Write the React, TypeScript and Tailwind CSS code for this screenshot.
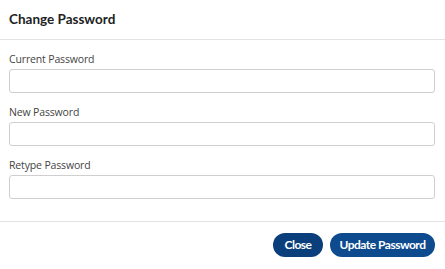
import React from "react";

export default function App() {
  const fields = ["Current Password", "New Password", "Retype Password"];
  return (
    <div className="w-[445px] h-[269px] bg-white flex flex-col">
      <div className="h-[39px] flex items-center pl-[9px] border-b border-[#e3e3e3] box-content">
        <h1 className="text-[13.5px] font-bold text-[#222] [font-family:Lato,'Liberation_Sans',sans-serif]">
          Change Password
        </h1>
      </div>
      <div className="pl-[9px] pr-[10px] pt-[12px] pb-[22px] flex flex-col gap-[12px] border-b border-[#e3e3e3]">
        {fields.map((f) => (
          <div key={f} className="flex flex-col gap-[2px]">
            <label className="text-[10.5px] leading-[15px] tracking-[-0.15px] text-[#444] [font-family:'Open_Sans',sans-serif]">
              {f}
            </label>
            <input
              type="password"
              className="h-[24px] w-full border border-[#cfcfcf] rounded-[3px] bg-white outline-none"
            />
          </div>
        ))}
      </div>
      <div className="flex justify-end gap-[7px] pr-[10px] pt-[11px]">
        <button className="h-[24px] w-[50px] rounded-full bg-[#0a3f7c] text-white text-[12px] font-bold tracking-[-0.5px] [font-family:Lato,'Liberation_Sans',sans-serif]">
          Close
        </button>
        <button className="h-[24px] w-[105px] rounded-full bg-[#0d4a8e] text-white text-[12px] font-bold tracking-[-0.5px] [font-family:Lato,'Liberation_Sans',sans-serif]">
          Update Password
        </button>
      </div>
    </div>
  );
}
